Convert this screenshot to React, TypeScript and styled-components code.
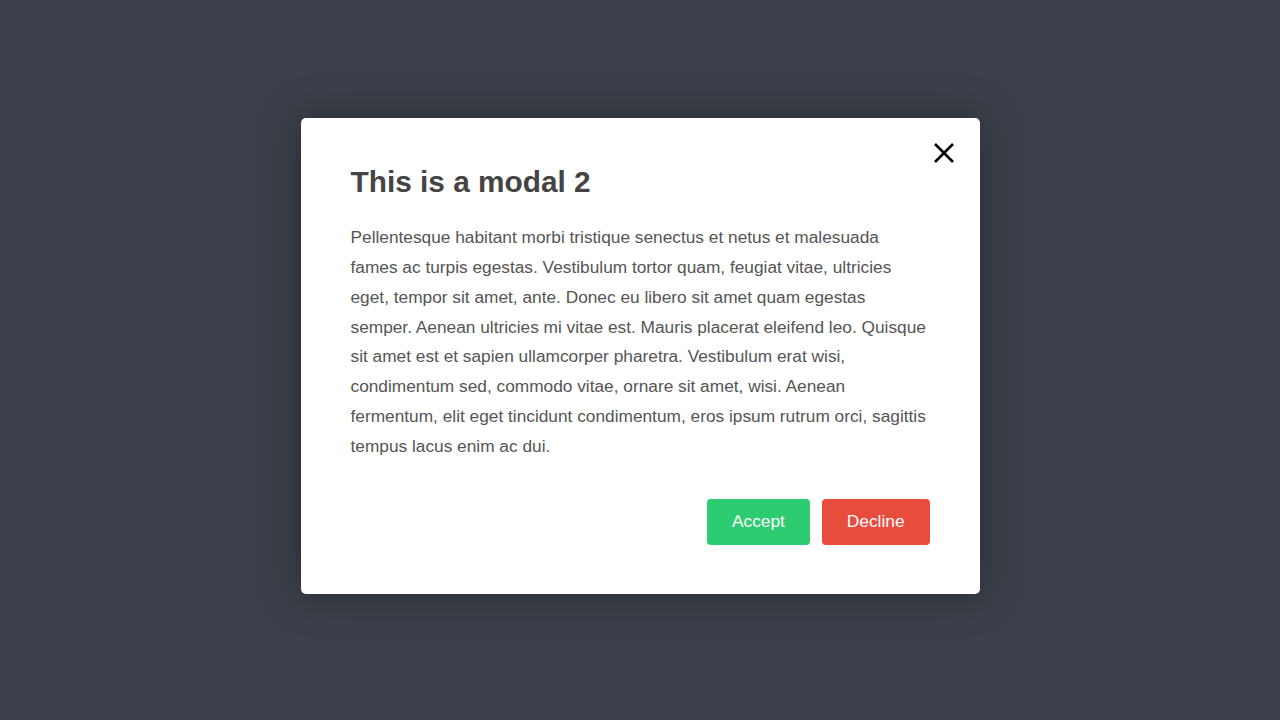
import React from "react";
import styled, { createGlobalStyle } from "styled-components";

const Global = createGlobalStyle`
  html, body { margin: 0; padding: 0; }
  body {
    background: #3c404a;
    font-family: "Liberation Sans", Arial, sans-serif;
  }
`;

const Page = styled.div`
  width: 1280px;
  height: 720px;
  display: flex;
  justify-content: center;
  align-items: flex-start;
  padding-top: 118px;
  box-sizing: border-box;
  background: #3c404a;
`;

const Modal = styled.div`
  position: relative;
  width: 679px;
  box-sizing: border-box;
  padding: 46px 50px 49px;
  background: #ffffff;
  border-radius: 5px;
  box-shadow: 0 0 40px rgba(0, 0, 0, 0.35);
`;

const Close = styled.button`
  position: absolute;
  top: 23px;
  right: 24px;
  width: 24px;
  height: 24px;
  padding: 0;
  border: none;
  background: transparent;
  display: flex;
  align-items: center;
  justify-content: center;
  cursor: pointer;
`;

const Title = styled.h2`
  margin: 0;
  font-size: 29.8px;
  font-weight: 700;
  color: #444444;
  line-height: 36px;
`;

const Body = styled.p`
  margin: 23px 0 0;
  font-size: 17.3px;
  line-height: 29.86px;
  color: #555555;
`;

const Actions = styled.div`
  display: flex;
  justify-content: flex-end;
  gap: 12px;
  margin-top: 37px;
`;

const Button = styled.button<{ $variant: "accept" | "decline" }>`
  height: 46px;
  padding: 0 25px;
  border: none;
  border-radius: 4px;
  font-family: "Liberation Sans", Arial, sans-serif;
  font-size: 17.3px;
  color: #ffffff;
  background: ${(p) => (p.$variant === "accept" ? "#2ecc71" : "#e74c3c")};
  cursor: pointer;
`;

export default function App() {
  return (
    <>
      <Global />
      <Page>
        <Modal>
          <Close aria-label="Close">
            <svg width="22" height="22" viewBox="0 0 22 22">
              <path d="M2 2 L20 20 M20 2 L2 20" stroke="#000" strokeWidth="2.6" />
            </svg>
          </Close>
          <Title>This is a modal 2</Title>
          <Body>
            Pellentesque habitant morbi tristique senectus et netus et malesuada
            fames ac turpis egestas. Vestibulum tortor quam, feugiat vitae, ultricies
            eget, tempor sit amet, ante. Donec eu libero sit amet quam egestas
            semper. Aenean ultricies mi vitae est. Mauris placerat eleifend leo. Quisque
            sit amet est et sapien ullamcorper pharetra. Vestibulum erat wisi,
            condimentum sed, commodo vitae, ornare sit amet, wisi. Aenean
            fermentum, elit eget tincidunt condimentum, eros ipsum rutrum orci, sagittis
            tempus lacus enim ac dui.
          </Body>
          <Actions>
            <Button $variant="accept">Accept</Button>
            <Button $variant="decline">Decline</Button>
          </Actions>
        </Modal>
      </Page>
    </>
  );
}
